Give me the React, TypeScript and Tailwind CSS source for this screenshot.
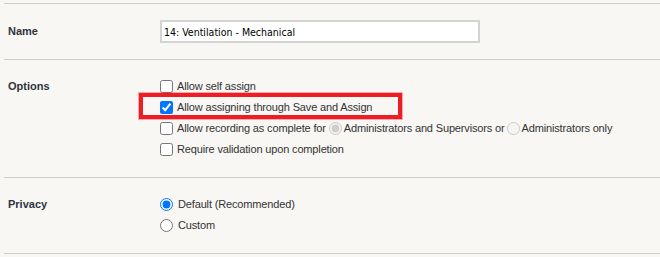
import React from 'react';

const font = { fontFamily: '"Liberation Sans", Arial, sans-serif' };

function Check({ checked = false }: { checked?: boolean }) {
  return (
    <input
      type="checkbox"
      defaultChecked={checked}
      className="m-0 h-[13px] w-[13px] shrink-0 accent-[#0075ff]"
    />
  );
}

function Radio({
  checked = false,
  disabled = false,
  name,
}: {
  checked?: boolean;
  disabled?: boolean;
  name: string;
}) {
  return (
    <input
      type="radio"
      name={name}
      defaultChecked={checked}
      disabled={disabled}
      className="m-0 h-[13px] w-[13px] shrink-0 accent-[#0075ff]"
    />
  );
}

export default function App() {
  return (
    <div
      className="h-[257px] w-[660px] overflow-hidden bg-[#f8f7f3] pl-1 pt-[3px] text-[11px] tracking-[-0.15px] text-[#333333]"
      style={font}
    >
      {/* Name */}
      <section className="flex h-[56px] items-center border-t border-[#cfcfcf]">
        <div className="w-[156px] pl-1 font-bold tracking-normal text-[#2e3440]">Name</div>
        <input
          type="text"
          defaultValue="14: Ventilation - Mechanical"
          className="h-[23px] w-[320px] border-2 border-[#d4d4d4] bg-white px-[2px] text-[10.5px] tracking-normal text-black outline-none"
          style={{ fontFamily: '"DejaVu Sans Condensed", "DejaVu Sans", Tahoma, sans-serif' }}
        />
      </section>

      {/* Options */}
      <section className="flex border-t border-[#cfcfcf] pb-[17px] pt-[16px]">
        <div className="flex h-[21px] w-[156px] items-center pl-1 font-bold tracking-normal text-[#2e3440]">
          Options
        </div>
        <div className="flex flex-col">
          <label className="flex h-[21px] items-center gap-[4px]">
            <Check />
            <span>Allow self assign</span>
          </label>
          <label className="relative flex h-[21px] items-center gap-[4px]">
            <Check checked />
            <span>Allow assigning through Save and Assign</span>
            <span className="pointer-events-none absolute left-[-21px] top-[-4px] h-[26px] w-[263px] border-[4px] border-[#ee1c25] shadow-[0_0_0_1px_rgba(238,28,37,0.35)]" />
          </label>
          <label className="flex h-[21px] items-center gap-[4px]">
            <Check />
            <span className="flex items-center">
              <span className="mr-[3px]">Allow recording as complete for</span>
              <Radio name="rec" checked disabled />
              <span className="ml-[2px] mr-[2px]">Administrators and Supervisors or</span>
              <Radio name="rec" disabled />
              <span className="ml-[2px]">Administrators only</span>
            </span>
          </label>
          <label className="flex h-[21px] items-center gap-[4px]">
            <Check />
            <span>Require validation upon completion</span>
          </label>
        </div>
      </section>

      {/* Privacy */}
      <section className="flex border-t border-[#cfcfcf] pb-[17px] pt-[16px]">
        <div className="flex h-[21px] w-[156px] items-center pl-1 font-bold tracking-normal text-[#2e3440]">
          Privacy
        </div>
        <div className="flex flex-col">
          <label className="flex h-[21px] items-center gap-[5px]">
            <Radio name="privacy" checked />
            <span>Default (Recommended)</span>
          </label>
          <label className="flex h-[21px] items-center gap-[5px]">
            <Radio name="privacy" />
            <span>Custom</span>
          </label>
        </div>
      </section>
      <div className="border-t border-[#cfcfcf]" />
    </div>
  );
}
